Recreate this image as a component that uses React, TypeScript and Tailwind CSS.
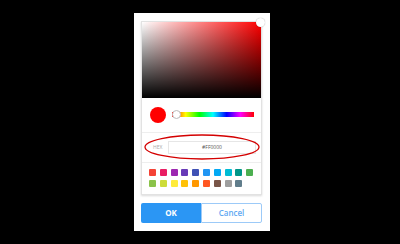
import React from "react";

const row1 = ["#f44336", "#e91e63", "#9c27b0", "#673ab7", "#3f51b5", "#2196f3", "#03a9f4", "#00bcd4", "#009688", "#4caf50"];
const row2 = ["#8bc34a", "#cddc39", "#ffeb3b", "#ffc107", "#ff9800", "#ff5722", "#795548", "#9e9e9e", "#607d8b"];

export default function App() {
  return (
    <div className="w-[400px] h-[244px] bg-black pl-[134px] pt-[13px]" style={{ fontFamily: '"Open Sans", "Liberation Sans", sans-serif' }}>
      <div className="relative w-[136px] h-[218px] bg-white pt-[8px] pl-[7px] pr-[8px] flex flex-col">
        <div className="w-[121px] h-[174px] border border-[#e2e2e2] shadow-[0_1px_2px_rgba(0,0,0,0.15)] flex flex-col">
          <div className="relative h-[76px] bg-[linear-gradient(to_top,#000,transparent),linear-gradient(to_right,#fff,#f00)]">
            <div className="absolute right-[-4px] top-[-4px] w-[9px] h-[9px] rounded-full bg-white shadow-[0_0_1px_rgba(0,0,0,0.4)]" />
          </div>
          <div className="h-[35px] flex items-center pl-[8px] pr-[7px] border-b border-[#eeeeee]">
            <div className="w-[16px] h-[16px] rounded-full bg-[#ff0000] shrink-0" />
            <div className="relative ml-[6px] flex-1 h-[5px] mt-[-2px] bg-[linear-gradient(to_right,#f00,#ff0,#0f0,#0ff,#00f,#f0f,#f00)]">
              <div className="absolute left-[0px] top-[-2px] w-[9px] h-[9px] rounded-full bg-white border border-[#bbb]" />
            </div>
          </div>
          <div className="h-[30px] flex items-center pl-[11px] pr-[5px] border-b border-[#eeeeee]">
            <span className="text-[5px] text-[#aaaaaa] w-[15px] leading-none">HEX</span>
            <div className="flex-1 h-[13px] border border-[#e6e6e6] flex items-center justify-center text-[5px] text-[#555] leading-none">#FF0000</div>
          </div>
          <div className="flex-1 flex flex-col pl-[7px] pt-[6px] gap-[3.8px]">
            <div className="flex gap-[3.8px]">
              {row1.map((c) => (
                <div key={c} className="w-[7px] h-[7px] rounded-[1px]" style={{ backgroundColor: c }} />
              ))}
            </div>
            <div className="flex gap-[3.8px]">
              {row2.map((c) => (
                <div key={c} className="w-[7px] h-[7px] rounded-[1px]" style={{ backgroundColor: c }} />
              ))}
            </div>
          </div>
        </div>
        <div className="flex mt-[8px] h-[20px] w-[121px]">
          <div className="w-[60px] h-full bg-[#2b96f4] rounded-l-[2px] flex items-center justify-center text-white text-[8px] font-bold">OK</div>
          <div className="flex-1 h-full border border-[#9ccaf8] rounded-r-[2px] flex items-center justify-center text-[#5ea8f2] text-[8px] font-semibold">Cancel</div>
        </div>
        <svg className="absolute left-[10px] top-[121px]" width="116" height="26" viewBox="0 0 116 26">
          <ellipse cx="58" cy="13" rx="57" ry="12" fill="none" stroke="#d40000" strokeWidth="1.3" />
        </svg>
      </div>
    </div>
  );
}
